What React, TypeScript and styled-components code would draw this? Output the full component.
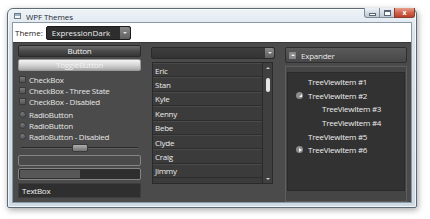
import React from 'react';
import styled, { createGlobalStyle } from 'styled-components';

const GlobalStyle = createGlobalStyle`
  html, body {
    margin: 0;
    padding: 0;
    background: #ffffff;
    font-family: "Open Sans", "Noto Sans", sans-serif;
  }
  * { box-sizing: border-box; }
`;

const Page = styled.div`
  width: 430px;
  height: 219px;
  padding: 8px 0 0 7px;
`;

const Window = styled.div`
  width: 410px;
  height: 200px;
  border: 1px solid #5d6b78;
  border-radius: 6px 6px 2px 2px;
  background: linear-gradient(180deg, #eef3f7 0%, #dbe4eb 12%, #cfdbe4 100%);
  box-shadow: 1px 2px 6px rgba(0, 0, 0, 0.35), inset 0 0 0 1px rgba(255, 255, 255, 0.7);
  display: flex;
  flex-direction: column;
  padding: 0 4px 4px 4px;
`;

const TitleBar = styled.div`
  height: 15px;
  display: flex;
  align-items: flex-start;
  gap: 5px;
  padding-left: 2px;
`;

const TitleIcon = styled.div`
  margin-top: 4px;
  width: 7px;
  height: 6px;
  border: 1px solid #6d7b88;
  background: linear-gradient(180deg, #9fb4c6 0 2px, #f4f6f8 2px);
`;

const TitleText = styled.span`
  margin-top: 3px;
  font-size: 8px;
  line-height: 10px;
  color: #1e2a36;
  letter-spacing: -0.1px;
`;

const Caption = styled.div`
  margin-left: auto;
  margin-right: -3px;
  margin-top: -1px;
  display: flex;
`;

const CapButton = styled.div<{ close?: boolean }>`
  width: ${p => (p.close ? 21 : 16)}px;
  height: 10px;
  border: 1px solid ${p => (p.close ? '#8e3a2c' : '#7d8a96')};
  border-top: none;
  margin-left: -1px;
  background: ${p =>
    p.close
      ? 'linear-gradient(180deg, #e6a08f 0%, #d2654e 50%, #b8412b 100%)'
      : 'linear-gradient(180deg, #eef2f5 0%, #d5dde4 50%, #bfcad4 100%)'};
  border-radius: ${p => (p.close ? '0 0 3px 0' : '0')};
  display: flex;
  align-items: center;
  justify-content: center;
  color: #ffffff;
  font-size: 7px;
  font-weight: bold;
  line-height: 1;
  &:first-child { border-radius: 0 0 0 3px; }
`;

const MinGlyph = styled.div`
  width: 7px;
  height: 3px;
  margin-top: 3px;
  border: 1px solid #5a6673;
  background: #fff;
`;

const MaxGlyph = styled.div`
  width: 7px;
  height: 6px;
  border: 1px solid #5a6673;
  border-top-width: 2px;
  background: #fff;
`;

const Client = styled.div`
  flex: 1;
  display: flex;
  flex-direction: column;
  border: 1px solid #8a9aa8;
`;

const Toolbar = styled.div`
  height: 19px;
  background: #ffffff;
  display: flex;
  align-items: center;
  gap: 3px;
  padding-left: 2px;
  font-size: 8px;
  color: #1a1a1a;
`;

const ThemeCombo = styled.div`
  width: 85px;
  height: 14px;
  border-radius: 2px;
  background: #2e2e2e;
  border: 1px solid #1b1b1b;
  display: flex;
  align-items: center;
  padding-left: 5px;
  color: #ececec;
  font-size: 8px;
`;

const ComboArrow = styled.div<{ w?: number }>`
  margin-left: auto;
  width: ${p => p.w ?? 10}px;
  height: 100%;
  border-radius: 0 2px 2px 0;
  background: linear-gradient(180deg, #8a8a8a, #5e5e5e);
  display: flex;
  align-items: center;
  justify-content: center;
  &::after {
    content: '';
    border-left: 2px solid transparent;
    border-right: 2px solid transparent;
    border-top: 2px solid #e6e6e6;
  }
`;

const Dark = styled.div`
  flex: 1;
  background: #4b4b4b;
  border-top: 1px solid #3a3a3a;
  display: grid;
  grid-template-columns: 123px 124px 122px;
  column-gap: 10px;
  padding: 2px 0 0 5px;
  color: #e8e8e8;
  font-size: 8px;
  letter-spacing: -0.25px;
`;

const Column = styled.div`
  display: flex;
  flex-direction: column;
`;

const PushButton = styled.div<{ toggled?: boolean }>`
  height: 12px;
  margin-bottom: 2px;
  border-radius: 2px;
  border: 1px solid ${p => (p.toggled ? '#9a9a9a' : '#2a2a2a')};
  background: ${p =>
    p.toggled
      ? 'linear-gradient(180deg, #f4f4f4 0%, #d6d6d6 50%, #a9a9a9 100%)'
      : 'linear-gradient(180deg, #6c6c6c 0%, #4a4a4a 50%, #363636 100%)'};
  color: #f2f2f2;
  display: flex;
  align-items: center;
  justify-content: center;
  font-size: 8px;
  line-height: 1;
`;

const OptionRow = styled.div`
  height: 11px;
  display: flex;
  align-items: center;
  gap: 3px;
  padding-left: 1px;
  color: #e6e6e6;
`;

const Check = styled.div`
  width: 7px;
  height: 7px;
  border: 1px solid #3a3a3a;
  background: linear-gradient(180deg, #7a7a7a, #555555);
`;

const Radio = styled(Check)`
  border-radius: 50%;
`;

const Spacer = styled.div<{ h: number }>`
  height: ${p => p.h}px;
  flex: none;
`;

const SliderRow = styled.div`
  height: 12px;
  position: relative;
  display: flex;
  align-items: center;
  padding: 0 3px;
`;

const Track = styled.div`
  flex: 1;
  height: 2px;
  background: #2a2a2a;
  border-bottom: 1px solid #5c5c5c;
`;

const Thumb = styled.div`
  position: absolute;
  left: 54px;
  top: 2px;
  width: 16px;
  height: 8px;
  border-radius: 2px;
  border: 1px solid #3a3a3a;
  background: linear-gradient(180deg, #b0b0b0, #707070);
`;

const Progress = styled.div<{ h: number; mt: number; filled?: boolean }>`
  height: ${p => p.h}px;
  margin-top: ${p => p.mt}px;
  border: 1px solid #858585;
  border-radius: 2px;
  background: ${p => (p.filled ? '#2e2e2e' : '#4a4a4a')};
  display: flex;
  padding: 1px;
`;

const ProgressFill = styled.div`
  background: #575757;
  height: 100%;
`;

const TextBox = styled.div`
  height: 15px;
  margin-top: 3px;
  background: #2f2f2f;
  border: 1px solid #3d3d3d;
  display: flex;
  align-items: center;
  padding-left: 3px;
  color: #f0f0f0;
`;

const Combo = styled.div`
  height: 12px;
  margin-top: 2px;
  border-radius: 2px;
  border: 1px solid #2a2a2a;
  background: linear-gradient(180deg, #3e3e3e, #333333);
  display: flex;
`;

const ListBox = styled.div`
  height: 122px;
  margin-top: 3px;
  margin-left: 1px;
  margin-right: 2px;
  border: 1px solid #2a2a2a;
  background: #3b3b3b;
  display: flex;
`;

const Items = styled.div`
  flex: 1;
  display: flex;
  flex-direction: column;
  border-right: 1px solid #2a2a2a;
`;

const Item = styled.div`
  height: 14.4px;
  flex: none;
  display: flex;
  align-items: center;
  padding-left: 2px;
  border-bottom: 1px solid #2d2d2d;
  border-top: 1px solid #4a4a4a;
  color: #ececec;
`;

const ScrollBar = styled.div`
  width: 9px;
  display: flex;
  flex-direction: column;
  align-items: center;
  background: #3f3f3f;
  padding-top: 4px;
`;

const ArrowUp = styled.div`
  border-left: 2px solid transparent;
  border-right: 2px solid transparent;
  border-bottom: 2px solid #cfcfcf;
`;

const ArrowDown = styled.div`
  margin-top: auto;
  margin-bottom: 3px;
  border-left: 2px solid transparent;
  border-right: 2px solid transparent;
  border-top: 2px solid #cfcfcf;
`;

const ScrollThumb = styled.div`
  margin-top: 9px;
  width: 4px;
  height: 14px;
  border-radius: 2px;
  background: #e6e6e6;
`;

const ExpanderHeader = styled.div`
  height: 16px;
  margin-top: 2px;
  border: 1px solid #2e2e2e;
  border-radius: 2px;
  background: linear-gradient(180deg, #5a5a5a, #474747);
  display: flex;
  align-items: center;
  gap: 5px;
  padding-left: 3px;
`;

const ExpIcon = styled.div`
  width: 7px;
  height: 7px;
  border-radius: 1px;
  background: #8a8a8a;
  display: flex;
  align-items: center;
  justify-content: center;
  &::after {
    content: '';
    border-left: 2px solid transparent;
    border-right: 2px solid transparent;
    border-bottom: 2px solid #f0f0f0;
  }
`;

const ExpanderBody = styled.div`
  height: 136px;
  margin-top: 3px;
  border: 1px solid #5e5e5e;
  background: #454545;
  padding: 5px 1px 10px 1px;
  display: flex;
`;

const Tree = styled.div`
  flex: 1;
  background: #323232;
  border: 1px solid #2a2a2a;
  padding-top: 2px;
  display: flex;
  flex-direction: column;
`;

const TreeRow = styled.div<{ level: number }>`
  height: 13.6px;
  display: flex;
  align-items: center;
  padding-left: ${p => 20 + p.level * 14}px;
  position: relative;
  color: #eeeeee;
`;

const Toggle = styled.div<{ open?: boolean }>`
  position: absolute;
  left: 8px;
  width: 7px;
  height: 7px;
  border-radius: 50%;
  background: #8c8c8c;
  display: flex;
  align-items: center;
  justify-content: center;
  &::after {
    content: '';
    ${p =>
      p.open
        ? 'border-left: 3px solid transparent; border-bottom: 3px solid #f2f2f2; margin: 1px 0 0 1px;'
        : 'border-top: 2px solid transparent; border-bottom: 2px solid transparent; border-left: 3px solid #f2f2f2; margin-left: 1px;'}
  }
`;

const names = ['Eric', 'Stan', 'Kyle', 'Kenny', 'Bebe', 'Clyde', 'Craig', 'Jimmy'];

const treeItems = [
  { label: 'TreeViewItem #1', level: 0 },
  { label: 'TreeViewItem #2', level: 0, toggle: 'open' },
  { label: 'TreeViewItem #3', level: 1 },
  { label: 'TreeViewItem #4', level: 1 },
  { label: 'TreeViewItem #5', level: 0 },
  { label: 'TreeViewItem #6', level: 0, toggle: 'closed' },
];

const App = () => {
  return (
    <>
      <GlobalStyle />
      <Page>
        <Window>
          <TitleBar>
            <TitleIcon />
            <TitleText>WPF Themes</TitleText>
            <Caption>
              <CapButton><MinGlyph /></CapButton>
              <CapButton><MaxGlyph /></CapButton>
              <CapButton close>x</CapButton>
            </Caption>
          </TitleBar>
          <Client>
            <Toolbar>
              <span>Theme:</span>
              <ThemeCombo>
                ExpressionDark
                <ComboArrow />
              </ThemeCombo>
            </Toolbar>
            <Dark>
              <Column>
                <PushButton>Button</PushButton>
                <PushButton toggled>ToggleButton</PushButton>
                <Spacer h={1} />
                <OptionRow><Check />CheckBox</OptionRow>
                <OptionRow><Check />CheckBox - Three State</OptionRow>
                <OptionRow><Check />CheckBox - Disabled</OptionRow>
                <Spacer h={2} />
                <OptionRow><Radio />RadioButton</OptionRow>
                <OptionRow><Radio />RadioButton</OptionRow>
                <OptionRow><Radio />RadioButton - Disabled</OptionRow>
                <SliderRow>
                  <Track />
                  <Thumb />
                </SliderRow>
                <Progress h={11} mt={1} />
                <Progress h={12} mt={2} filled>
                  <ProgressFill style={{ width: '50%' }} />
                </Progress>
                <TextBox>TextBox</TextBox>
              </Column>
              <Column>
                <Combo>
                  <ComboArrow w={9} />
                </Combo>
                <ListBox>
                  <Items>
                    {names.map(n => (
                      <Item key={n}>{n}</Item>
                    ))}
                  </Items>
                  <ScrollBar>
                    <ArrowUp />
                    <ScrollThumb />
                    <ArrowDown />
                  </ScrollBar>
                </ListBox>
              </Column>
              <Column>
                <ExpanderHeader>
                  <ExpIcon />
                  Expander
                </ExpanderHeader>
                <ExpanderBody>
                  <Tree>
                    {treeItems.map(t => (
                      <TreeRow key={t.label} level={t.level}>
                        {t.toggle && <Toggle open={t.toggle === 'open'} />}
                        {t.label}
                      </TreeRow>
                    ))}
                  </Tree>
                </ExpanderBody>
              </Column>
            </Dark>
          </Client>
        </Window>
      </Page>
    </>
  );
};

export default App;
